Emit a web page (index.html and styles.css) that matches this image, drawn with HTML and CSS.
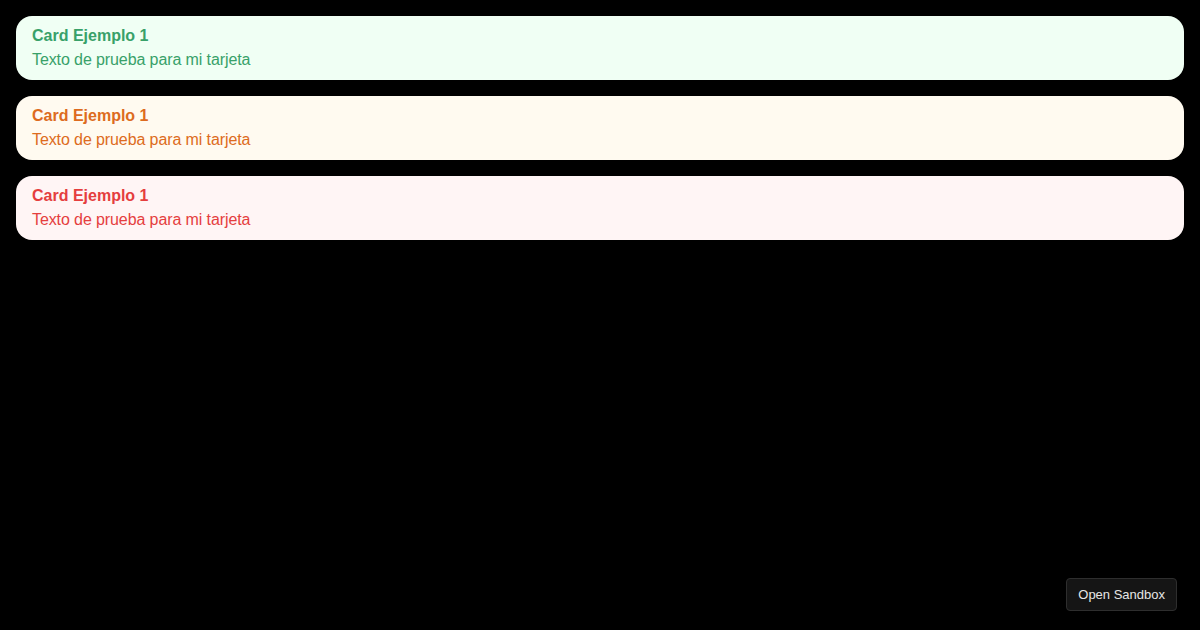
FILE: index.html
```html
<!DOCTYPE html>
<html>
<head>
<meta charset="utf-8">
<link rel="stylesheet" href="styles.css">
</head>
<body>
<div class="list">
  <div class="card green">
    <div class="title">Card Ejemplo 1</div>
    <div class="text">Texto de prueba para mi tarjeta</div>
  </div>
  <div class="card orange">
    <div class="title">Card Ejemplo 1</div>
    <div class="text">Texto de prueba para mi tarjeta</div>
  </div>
  <div class="card red">
    <div class="title">Card Ejemplo 1</div>
    <div class="text">Texto de prueba para mi tarjeta</div>
  </div>
</div>
<button class="sandbox">Open Sandbox</button>
</body>
</html>
```
FILE: styles.css
```css
html, body {
  margin: 0;
  background: #000;
  height: 100%;
}
body {
  font-family: "Liberation Sans", Arial, sans-serif;
  padding: 16px;
  box-sizing: border-box;
}
.list {
  display: flex;
  flex-direction: column;
  gap: 16px;
}
.card {
  border-radius: 16px;
  padding: 8px 16px;
  font-size: 16px;
  line-height: 24px;
}
.title { font-weight: 700; }
.text { letter-spacing: -0.1px; }
.green { background: #F0FFF4; color: #38A169; }
.orange { background: #FFFAF0; color: #DD6B20; }
.red { background: #FFF5F5; color: #E53E3E; }
.sandbox {
  position: fixed;
  right: 23px;
  bottom: 19px;
  height: 33px;
  padding: 0 11px;
  background: #151515;
  color: #e6e6e6;
  border: 1px solid #2e2e2e;
  border-radius: 4px;
  font-family: "Liberation Sans", Arial, sans-serif;
  font-size: 13px;
}
```
